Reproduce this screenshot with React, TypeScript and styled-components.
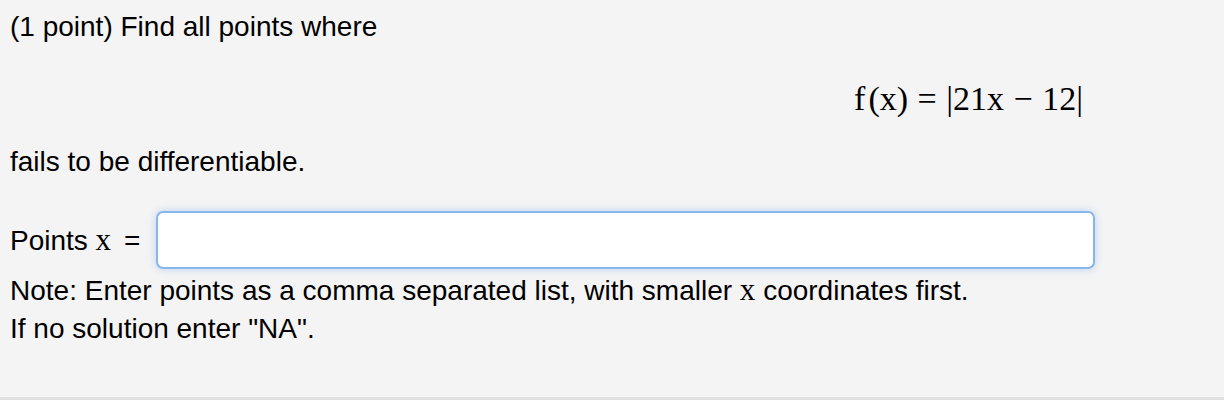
import React from 'react';
import styled, { createGlobalStyle } from 'styled-components';

const GlobalStyle = createGlobalStyle`
    html, body {
        margin: 0;
        padding: 0;
        background: #f4f4f4;
    }
`;

const Problem = styled.div`
    box-sizing: border-box;
    width: 1224px;
    height: 400px;
    padding: 8px 10px 0 10px;
    background: #f4f4f4;
    border-bottom: 3px solid #e0e0e0;
    font-family: 'Liberation Sans', Arial, sans-serif;
    font-size: 28px;
    line-height: 38px;
    color: #000;
`;

const Paragraph = styled.div<{ gap?: number }>`
    margin-top: ${(p) => p.gap ?? 0}px;
`;

const DisplayMath = styled.div`
    display: flex;
    justify-content: flex-end;
    padding-right: 131px;
    margin-top: 34px;
    font-family: 'Liberation Serif', 'Times New Roman', serif;
    font-size: 34px;
    line-height: 38px;
    word-spacing: 1px;
    white-space: pre;
`;

const MathFn = styled.span`
    margin-right: 3px;
`;

const MathVar = styled.span`
    font-family: 'Liberation Serif', 'Times New Roman', serif;
    font-size: 31px;
`;

const MathRel = styled.span`
    margin-left: 5px;
`;

const AnswerRow = styled.div`
    display: flex;
    align-items: center;
    gap: 16px;
    margin-top: 30px;
`;

const AnswerInput = styled.input`
    box-sizing: border-box;
    width: 939px;
    height: 58px;
    border: 2px solid #86b6ec;
    border-radius: 7px;
    background: #fff;
    box-shadow: 0 0 8px rgba(120, 170, 230, 0.45);
    outline: none;
    font-size: 28px;
    padding: 0 10px;
`;

export default function App() {
    return (
        <>
            <GlobalStyle />
            <Problem>
                <Paragraph>(1 point) Find all points where</Paragraph>
                <DisplayMath>
                    <MathFn>f</MathFn>
                    {'(x) = |21x − 12|'}
                </DisplayMath>
                <Paragraph gap={25}>fails to be differentiable.</Paragraph>
                <AnswerRow>
                    <span>
                        Points <MathVar>x</MathVar> <MathRel>=</MathRel>
                    </span>
                    <AnswerInput type="text" />
                </AnswerRow>
                <Paragraph gap={2}>
                    Note: Enter points as a comma separated list, with smaller <MathVar>x</MathVar> coordinates first.
                </Paragraph>
                <Paragraph>If no solution enter "NA".</Paragraph>
            </Problem>
        </>
    );
}
